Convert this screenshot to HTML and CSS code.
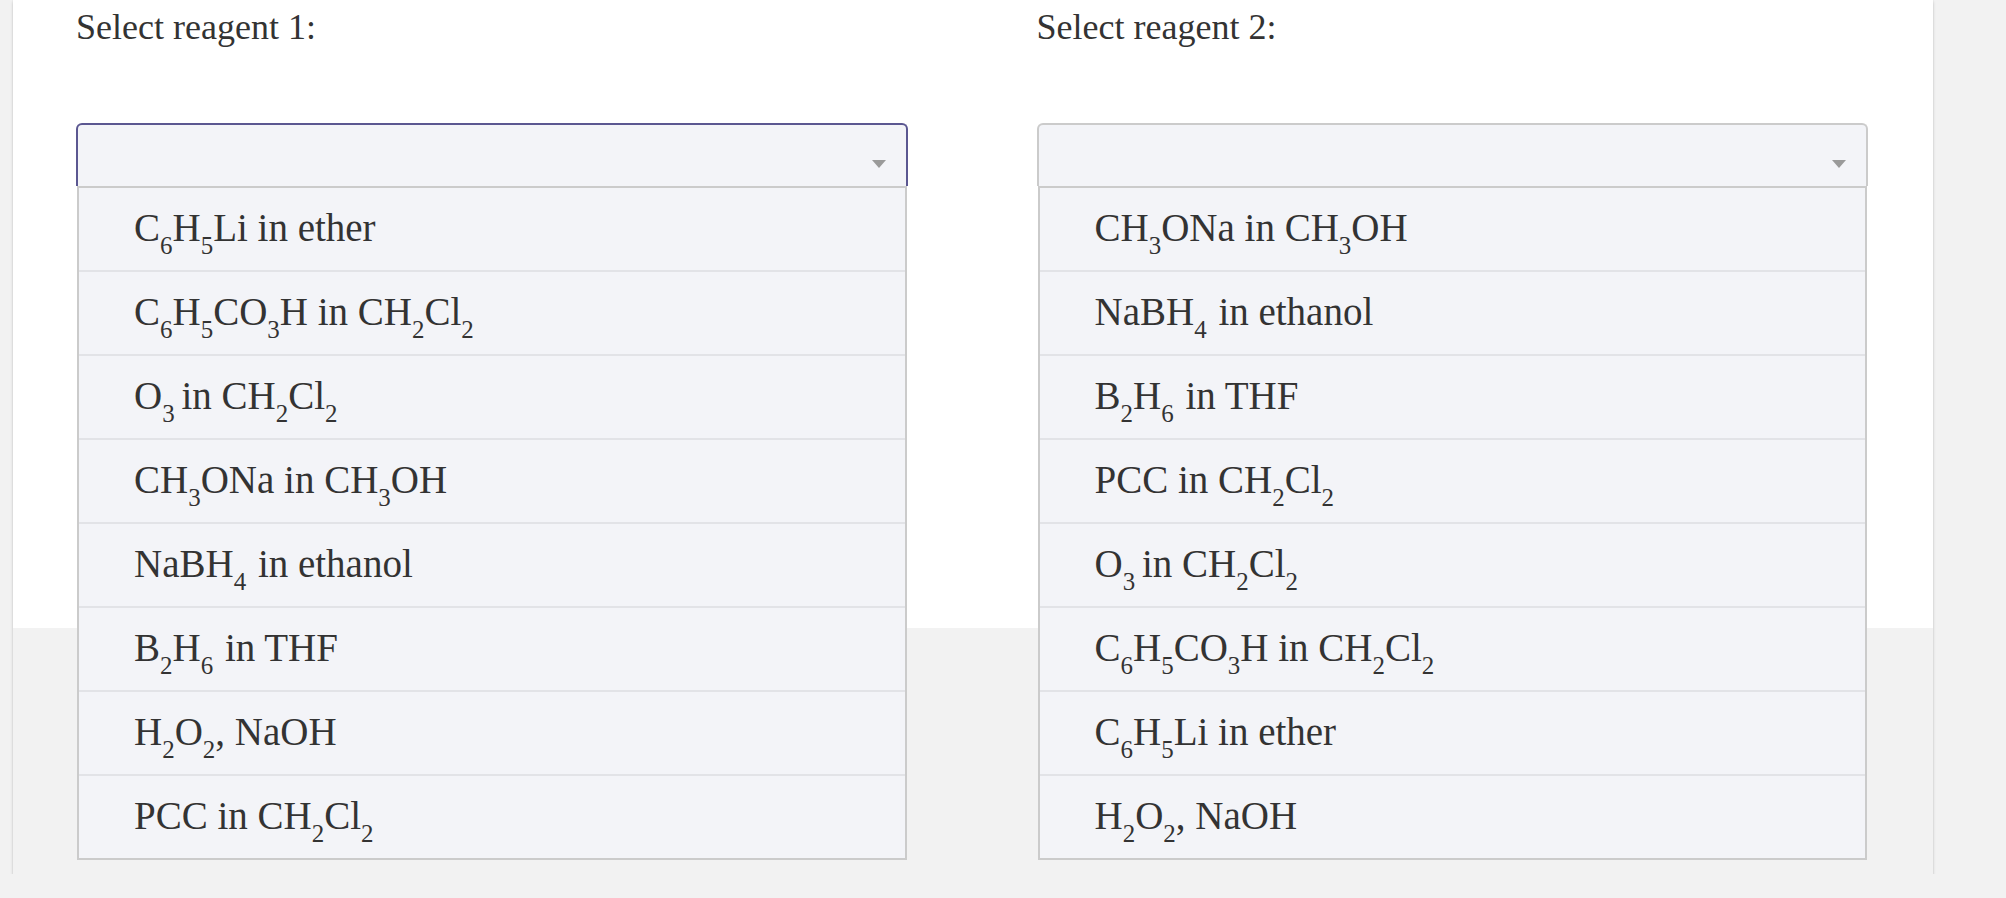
FILE: index.html
```html
<!DOCTYPE html>
<html lang="en">

<head>
    <meta charset="UTF-8" />
    <meta name="viewport" content="width=device-width, initial-scale=1.0" />
    <title>Select reagents</title>
    <link rel="stylesheet" href="styles.css">
</head>

<body>
    <div class="page">
        <div class="card">
            <div class="question">
                <div class="reagent">
                    <label class="reagent-label">Select reagent 1:</label>
                    <div class="dropdown focused">
                        <div class="dropdown-head">
                            <span class="arrow"></span>
                        </div>
                        <ul class="dropdown-list">
                            <li>C<sub>6</sub>H<sub>5</sub>Li in ether</li>
                            <li>C<sub>6</sub>H<sub>5</sub>CO<sub>3</sub>H in CH<sub>2</sub>Cl<sub>2</sub></li>
                            <li>O<sub class="tight">3</sub> in CH<sub>2</sub>Cl<sub>2</sub></li>
                            <li>CH<sub>3</sub>ONa in CH<sub>3</sub>OH</li>
                            <li>NaBH<sub class="wide">4</sub> in ethanol</li>
                            <li>B<sub>2</sub>H<sub class="wide">6</sub> in THF</li>
                            <li>H<sub>2</sub>O<sub>2</sub>, NaOH</li>
                            <li>PCC in CH<sub>2</sub>Cl<sub>2</sub></li>
                        </ul>
                    </div>
                </div>
                <div class="reagent">
                    <label class="reagent-label">Select reagent 2:</label>
                    <div class="dropdown">
                        <div class="dropdown-head">
                            <span class="arrow"></span>
                        </div>
                        <ul class="dropdown-list">
                            <li>CH<sub>3</sub>ONa in CH<sub>3</sub>OH</li>
                            <li>NaBH<sub class="wide">4</sub> in ethanol</li>
                            <li>B<sub>2</sub>H<sub class="wide">6</sub> in THF</li>
                            <li>PCC in CH<sub>2</sub>Cl<sub>2</sub></li>
                            <li>O<sub class="tight">3</sub> in CH<sub>2</sub>Cl<sub>2</sub></li>
                            <li>C<sub>6</sub>H<sub>5</sub>CO<sub>3</sub>H in CH<sub>2</sub>Cl<sub>2</sub></li>
                            <li>C<sub>6</sub>H<sub>5</sub>Li in ether</li>
                            <li>H<sub>2</sub>O<sub>2</sub>, NaOH</li>
                        </ul>
                    </div>
                </div>
            </div>
            <div class="card-footer"></div>
        </div>
    </div>
</body>

</html>
```

FILE: styles.css
```css
body {
    font-family: 'Liberation Serif', 'Times New Roman', serif;
    background-color: #f2f2f2;
    margin: 0;
    padding: 0;
    color: #333;
}

.page {
    padding-left: 13px;
}

.card {
    width: 1920px;
    background: #fff;
    box-shadow: 0 2px 3px rgba(0, 0, 0, 0.18), 0 0 1px rgba(0, 0, 0, 0.12);
}

.question {
    display: grid;
    grid-template-columns: 1fr 1fr;
    gap: 129px;
    height: 628px;
    padding: 0 65px 0 63px;
    box-sizing: border-box;
}

.card-footer {
    height: 246px;
    background: #f2f2f2;
}

.reagent-label {
    display: block;
    margin-top: 6px;
    font-size: 36px;
    line-height: 43px;
}

.dropdown {
    position: relative;
    margin-top: 74px;
}

.dropdown-head {
    height: 61px;
    background: #f3f4f8;
    border: 2px solid #cbcbcb;
    border-bottom: none;
    border-radius: 6px 6px 0 0;
    position: relative;
}

.dropdown.focused .dropdown-head {
    border-color: #5b5791;
}

.arrow {
    position: absolute;
    right: 20px;
    top: 35px;
    width: 0;
    height: 0;
    border-left: 7.5px solid transparent;
    border-right: 7.5px solid transparent;
    border-top: 8px solid #9a9a9a;
}

.dropdown-list {
    position: absolute;
    top: 63px;
    left: 1px;
    right: 1px;
    margin: 0;
    padding: 0;
    list-style: none;
    background: #f3f4f8;
    border: 2px solid #cbcbcb;
    z-index: 2;
}

.dropdown-list li {
    height: 82px;
    padding-left: 55px;
    font-size: 39px;
    line-height: 80px;
    white-space: nowrap;
    border-bottom: 2px solid #e2e3e7;
}

.dropdown-list li:last-child {
    border-bottom: none;
}

sub {
    font-size: 0.64em;
    line-height: 0;
    vertical-align: -13px;
}

sub.wide {
    margin-right: 2px;
}

sub.tight {
    margin-right: -3px;
}
```
